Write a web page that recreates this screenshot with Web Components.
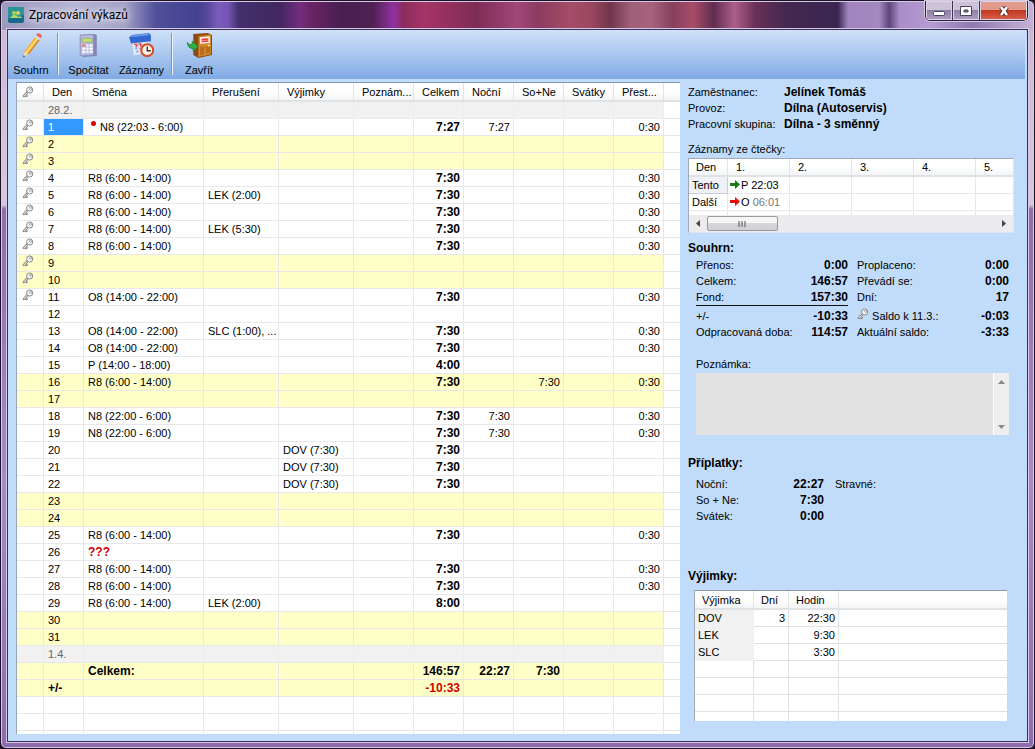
<!DOCTYPE html>
<html lang="cs">
<head>
<meta charset="utf-8">
<title>Zpracování výkazů</title>
<style>
  body { margin: 0; font: 11px/16px "Liberation Sans", Arial, sans-serif; color: #000; background: #1b1228; }
</style>
</head>
<body>
<app-window></app-window>
<script>
const define = (name, html, setup) => customElements.define(name, class extends HTMLElement {
  constructor() {
    super();
    this.attachShadow({ mode: 'open' }).innerHTML = html;
  }
  connectedCallback() { if (setup) setup.call(this, this.shadowRoot); }
});

const tableCss = `
  table { border-collapse: separate; border-spacing: 0; table-layout: fixed; width: 100%; background: #fff; }
  th, td { box-sizing: border-box; padding: 0; font-weight: normal; text-align: left; white-space: nowrap; overflow: hidden; line-height: 16px; }
  th { height: 19px; padding-left: 8px; border-right: 1px solid #e2e4e6; border-bottom: 2px solid #e0e2e4; background: linear-gradient(#fff 50%, #f3f4f6); }
  td { height: 17px; padding-left: 4px; border-right: 1px solid #e8e8ea; border-bottom: 1px solid #e8e8ea; }
  .num { text-align: right; padding-left: 0; padding-right: 3px; }
  th:last-child, td:last-child { border-right: 0; }
`;

/* Small silver key that marks closed days */
define('key-icon', `
  <style>:host { display: inline-block; width: 12px; height: 12px; vertical-align: top; } svg { display: block; }</style>
  <svg width="12" height="12" viewBox="0 0 12 12" fill="none">
    <path d="M5.6 6.2 1.800 10M3.300 8.800 4.600 10" stroke="#858585" stroke-width="2.4" stroke-linecap="round"/>
    <path d="M5.6 6.2 1.800 10M3.300 8.800 4.400 9.800" stroke="#f4f4f4" stroke-width="1"/>
    <circle cx="7.700" cy="4" r="3.1" fill="#f7f7f7" stroke="#8a8a8a"/>
    <circle cx="8.500" cy="3.300" r="1" fill="#fff" stroke="#8a8a8a" stroke-width=".8"/>
  </svg>`);

const icons = {
  pencil: `<path d="M5 18 16 3l4 3L9 20 4 23z" fill="#f9a928"/><path d="m7 19 11-14.5" stroke="#ffdc75" stroke-width="2"/><path d="M9 20 20 6" stroke="#d67a18"/><path d="m5 18 4 2-5 3.5z" fill="#f3d8ac"/><path d="m4.5 21.4 1.3.9L4 23.5z" fill="#333"/><path d="m15 4 1.5-2 4.3 3-1.6 2z" fill="#d4d8e2"/><path d="m16.5 2 1.2-1.6q2.2-.6 4 1.6.8 1-.9 3z" fill="#ed6253"/>`,
  calc: `<path d="m4 2 14-1 2 1v20l-13 1-3-2z" fill="#8587bb"/><path d="m4 2 13-.5V21L6 22l-2-1z" fill="#b9bbe0" stroke="#8082b5" stroke-width=".7"/><path d="M6 5h9.5v4H6z" fill="#bfdc79" stroke="#8ba957" stroke-width=".6"/><g fill="#fff"><path d="M6 11h3v2H6zM10 11h2v2h-2zM13 11h3v2h-3zM6 14h3v2H6zM10 14h2v2h-2zM13 14h3v2h-3zM6 17h3v2H6zM10 17h2v2h-2zM13 17h3v2h-3z"/></g><path d="M6 11h3v2H6z" fill="#e86565"/>`,
  calendar: `<path d="M2 6 19 4l1 15-16 3z" fill="#d9e7fb" stroke="#a4bde3" stroke-width=".6"/><path d="m0 4 3-2 16-2 2 2v6L2 10z" fill="#3267cf"/><path d="m1 4 2.500-1.500 15-2 1 1.300z" fill="#72a2f0"/><path d="m7 12 2-.3M11 11.500l2-.3M6 15l2-.3M7 18l2-.3M10 15h1" stroke="#91a7d8" stroke-width="1.800"/><path d="m5 11 2-.3v3.300M9 10.500l2-.2v3" stroke="#e24c4c" stroke-width="1.2" fill="none"/><circle cx="17.5" cy="16.5" r="5.7" fill="#fff3e5" stroke="#d34c26" stroke-width="2"/><path d="M17.5 13v4h3.500" fill="none" stroke="#333" stroke-width="1.3"/>`,
  door: `<path d="M6 1 20 0l4 2v19l-13 3-5-3z" fill="#8c4b13"/><path d="M11 3 23 1.500v19L11 23z" fill="#d68a2d"/><path d="M12.500 13h4v8l-4 .7zM18 12.500h4V19l-4 .8z" fill="#bb6c1d"/><path d="m12.500 4 9.500-.8v6.300l-9.500.8z" fill="#fff2ed"/><path d="m14 6.300 6.500-.5M14 8.200l6.500-.5" stroke="#e93636" stroke-width="1.5"/><circle cx="21" cy="12" r="1" fill="#ffe68a"/><path d="M0 9q2 3 5 2V8l6 5-5 4.500v-2.500Q1 15 0 9z" fill="#35ad45" stroke="#17792c" stroke-width=".7"/>`
};

define('tool-button', `
  <style>
    :host { display: block; }
    button { width: 100%; height: 49px; padding: 3px 0 0; border: 0; background: none; font: inherit; color: inherit; display: flex; flex-direction: column; align-items: center; gap: 4px; }
    svg { display: block; flex: none; }
  </style>
  <button type="button"><svg width="25" height="25" viewBox="0 0 24 24"></svg><span><slot></slot></span></button>`,
  function (root) { root.querySelector('svg').innerHTML = icons[this.getAttribute('icon')]; });

define('tool-bar', `
  <style>
    :host { display: flex; height: 49px; margin-right: 2px; background: linear-gradient(#cfe1f8, #a6c4ee 55%, #80aae4); }
    tool-button { width: 46px; } .wide { width: 53px; }
    i { width: 1px; margin: 3px 3px 4px; background: #7398ca; border-right: 1px solid #eef5ff; }
  </style>
  <tool-button icon="pencil">Souhrn</tool-button><i></i>
  <tool-button class="wide" icon="calc">Spočítat</tool-button>
  <tool-button class="wide" icon="calendar">Záznamy</tool-button><i></i>
  <tool-button icon="door">Zavřít</tool-button>`);

define('title-bar', `
  <style>
    :host { display: flex; height: 28px; padding-left: 7px; align-items: center; gap: 5px; box-sizing: border-box; }
    h1 { flex: 1; margin: 0; font: 12px/18px Roboto, "Open Sans", sans-serif; text-shadow: 0 0 6px #fff, 0 0 10px #fff; }
    .box { display: flex; align-self: flex-start; height: 19px; margin-right: 6px; border: 1px solid #2e2340; border-top: 0; border-radius: 0 0 5px 5px; overflow: hidden; box-shadow: 0 0 0 1px #d5c8e2; }
    button { width: 27px; padding: 0; border: 0; border-right: 1px solid #3c3150; background: linear-gradient(#cbc2d6 0 45%, #8e80a2 50%, #b0a0c4); display: grid; place-items: center; box-shadow: inset 0 0 0 1px #ddd3e6; }
    button:last-child { width: 47px; border: 0; background: linear-gradient(#e29a8c 0 45%, #c03a20 50%, #d8604c); }
  </style>
  <svg width="16" height="16" viewBox="0 0 16 16"><rect width="16" height="16" rx="2" fill="#17698a"/><path d="M0 2q0-2 2-2h12q2 0 2 2v6L0 12z" fill="#2a9598"/><circle cx="6" cy="6" r="2" fill="#aad45e"/><circle cx="10" cy="6" r="2" fill="#e0cf5a"/><path d="M2.5 11q1-3 4-3t3.500 2q3-2 4 1z" fill="#b3d96a"/></svg>
  <h1>Zpracování výkazů</h1>
  <div class="box">
    <button type="button" aria-label="Minimalizovat"><svg width="12" height="12"><rect x=".5" y="6.500" width="11" height="4" rx="1" fill="#fff" stroke="#4b4560"/></svg></button>
    <button type="button" aria-label="Maximalizovat"><svg width="12" height="12"><path d="M.5 1.500h11v9H.5z" fill="#fff" stroke="#4b4560"/><path d="M4 5h4v2H4z" fill="#8b809a" stroke="#4b4560"/></svg></button>
    <button type="button" aria-label="Zavřít okno"><svg width="14" height="12"><path d="m4 2 6 8M10 2l-6 8" stroke="#5c2a2a" stroke-width="4.500"/><path d="m4 2 6 8M10 2l-6 8" stroke="#fff" stroke-width="2.500"/></svg></button>
  </div>`);

/* Month sheet: [kind, day, shift, break, exception, total, night, sat+sun, overtime, locked] */
const R = 'R8 (6:00 - 14:00)', O = 'O8 (14:00 - 22:00)', N = 'N8 (22:00 - 6:00)', D = 'DOV (7:30)';
const days = [
  ['out', '28.2.'],
  ['sel', '1', 'N8 (22:03 - 6:00)', '', '', '7:27', '7:27', '', '0:30', 1],
  ['free', '2', '', '', '', '', '', '', '', 1], ['free', '3', '', '', '', '', '', '', '', 1],
  ['', '4', R, '', '', '7:30', '', '', '0:30', 1],
  ['', '5', R, 'LEK (2:00)', '', '7:30', '', '', '0:30', 1],
  ['', '6', R, '', '', '7:30', '', '', '0:30', 1],
  ['', '7', R, 'LEK (5:30)', '', '7:30', '', '', '0:30', 1],
  ['', '8', R, '', '', '7:30', '', '', '0:30', 1],
  ['free', '9', '', '', '', '', '', '', '', 1], ['free', '10', '', '', '', '', '', '', '', 1],
  ['', '11', O, '', '', '7:30', '', '', '0:30', 1],
  ['', '12'],
  ['', '13', O, 'SLC (1:00), ...', '', '7:30', '', '', '0:30'],
  ['', '14', O, '', '', '7:30', '', '', '0:30'],
  ['', '15', 'P (14:00 - 18:00)', '', '', '4:00'],
  ['free', '16', R, '', '', '7:30', '', '7:30', '0:30'],
  ['free', '17'],
  ['', '18', N, '', '', '7:30', '7:30', '', '0:30'],
  ['', '19', N, '', '', '7:30', '7:30', '', '0:30'],
  ['', '20', '', '', D, '7:30'], ['', '21', '', '', D, '7:30'], ['', '22', '', '', D, '7:30'],
  ['free', '23'], ['free', '24'],
  ['', '25', R, '', '', '7:30', '', '', '0:30'],
  ['odd', '26', '???'],
  ['', '27', R, '', '', '7:30', '', '', '0:30'],
  ['', '28', R, '', '', '7:30', '', '', '0:30'],
  ['', '29', R, 'LEK (2:00)', '', '8:00'],
  ['free', '30'], ['free', '31'],
  ['out', '1.4.'],
  ['free sum', '', 'Celkem:', '', '', '146:57', '22:27', '7:30'],
  ['free sum minus', '+/-', '', '', '', '-10:33'],
  ['', ''], ['', ''], ['tail', '']
];

define('month-sheet', `
  <style>
    :host { display: block; background: #fff; border-top: 1px solid #8199b8; border-left: 1px solid #98a5b5; box-sizing: border-box; }
    ${tableCss}
    td:first-child, th:first-child { padding: 0 0 0 5px; vertical-align: top; }
    key-icon { display: block; }
    th:first-child { padding-top: 3px; }
    .free td:not(:last-child) { background: #ffffc8; }
    .out td:not(:last-child) { background: #f1f1f1; border-right-color: #eee; color: #666; }
    .sel td:nth-child(2) { background: #3399ff; color: #fff; }
    .sel td:nth-child(3)::before { content: ""; display: inline-block; width: 5px; height: 5px; margin: 0 4px 5px 3px; border-radius: 50%; background: #e00000; vertical-align: baseline; }
    td:nth-child(7), .sum td, .odd td:nth-child(3) { font-weight: bold; font-size: 12px; }
    .odd td:nth-child(3), .minus td:nth-child(7) { color: #d00000; }
    .tail td { height: 3px; border-bottom: 0; line-height: 0; }
  </style>
  <table>
    <colgroup><col width="27"><col width="40"><col width="120"><col width="75"><col width="75"><col width="60"><col width="50"><col width="50"><col width="50"><col width="50"><col width="50"><col></colgroup>
    <thead><tr><th><key-icon></key-icon></th><th>Den</th><th>Směna</th><th>Přerušení</th><th>Výjimky</th><th>Poznám...</th><th>Celkem</th><th>Noční</th><th>So+Ne</th><th>Svátky</th><th>Přest...</th><th></th></tr></thead>
    <tbody></tbody>
  </table>`,
  function (root) {
    root.querySelector('tbody').innerHTML = days.map(([kind, day, shift = '', brk = '', exc = '', total = '', night = '', weekend = '', over = '', locked]) =>
      `<tr class="${kind}"><td>${locked ? '<key-icon></key-icon>' : ''}</td><td>${day}</td><td>${shift}</td><td>${brk}</td><td>${exc}</td><td></td>` +
      `<td class="num">${total}</td><td class="num">${night}</td><td class="num">${weekend}</td><td></td><td class="num">${over}</td><td></td></tr>`).join('');
  });

define('reader-log', `
  <style>
    :host { display: block; border: 1px solid #a0aab8; border-right-color: #dce6f2; border-bottom-color: #dce6f2; background: #fff; }
    ${tableCss}
    th { height: 18px; padding-left: 8px; }
    th:first-child { padding-left: 7px; } td { padding-left: 2px; } td:first-child { padding-left: 3px; }
    .now td:first-child { background: #eef1f6; border-color: #c5cedd; }
    .tail td { height: 4px; line-height: 0; border-bottom: 0; }
    svg { margin-right: 1px; } .late { color: #777; }
    .bar { display: flex; height: 17px; background: #ececee; align-items: center; }
    .bar button { width: 18px; height: 17px; padding: 0; border: 0; background: none; display: grid; place-items: center; }
    .thumb { box-sizing: border-box; width: 71px; height: 15px; border: 1px solid #9a9a9c; border-radius: 2px; background: linear-gradient(#f6f6f6 45%, #d6d6da 50%, #d0d0d4); display: grid; place-items: center; }
    .space { flex: 1; }
  </style>
  <table>
    <colgroup><col width="39"><col width="62"><col width="62"><col width="62"><col width="62"><col></colgroup>
    <thead><tr><th>Den</th><th>1.</th><th>2.</th><th>3.</th><th>4.</th><th>5.</th></tr></thead>
    <tbody>
      <tr class="now"><td>Tento</td><td><svg width="10" height="9" viewBox="0 0 10 9"><path d="M0 3h5V0l5 4.500L5 9V6H0z" fill="#1a7a1a"/></svg>P 22:03</td><td></td><td></td><td></td><td></td></tr>
      <tr><td>Další</td><td><svg width="10" height="9" viewBox="0 0 10 9"><path d="M0 3h5V0l5 4.500L5 9V6H0z" fill="#e01010"/></svg>O <span class="late">06:01</span></td><td></td><td></td><td></td><td></td></tr>
      <tr class="tail"><td></td><td></td><td></td><td></td><td></td><td></td></tr>
    </tbody>
  </table>
  <div class="bar">
    <button type="button" aria-label="Posunout vlevo"><svg width="4" height="7"><path d="M4 0v7L0 3.500z" fill="#444"/></svg></button>
    <div class="thumb"><svg width="8" height="6"><path d="M1 0v6M4 0v6M7 0v6" stroke="#555"/></svg></div>
    <div class="space"></div>
    <button type="button" aria-label="Posunout vpravo"><svg width="4" height="7"><path d="M0 0v7l4-3.500z" fill="#444"/></svg></button>
  </div>`);

define('value-row', `
  <style>
    :host { display: flex; justify-content: space-between; line-height: 16px; white-space: nowrap; }
    b { font-size: 12px; }
  </style>
  <span><slot></slot></span><b></b>`,
  function (root) { root.querySelector('b').textContent = this.getAttribute('value') || ''; });

define('exception-table', `
  <style>
    :host { display: block; border-top: 1px solid #8c98a8; border-left: 1px solid #a0aab8; background: #fff; }
    ${tableCss}
    th { padding-left: 7px; }
    td { padding-left: 3px; border-color: #dfe1e4; }
    tbody .data td:first-child { background: #f1f1f1; border-color: #f1f1f1; }
    .num { padding-left: 0; }
    .tail td { height: 9px; line-height: 0; border-bottom: 0; }
  </style>
  <table>
    <colgroup><col width="59"><col width="35"><col width="50"><col></colgroup>
    <thead><tr><th>Výjimka</th><th>Dní</th><th>Hodin</th><th></th></tr></thead>
    <tbody>
      <tr class="data"><td>DOV</td><td class="num">3</td><td class="num">22:30</td><td></td></tr>
      <tr class="data"><td>LEK</td><td></td><td class="num">9:30</td><td></td></tr>
      <tr class="data"><td>SLC</td><td></td><td class="num">3:30</td><td></td></tr>
      <tr><td></td><td></td><td></td><td></td></tr>
      <tr><td></td><td></td><td></td><td></td></tr>
      <tr><td></td><td></td><td></td><td></td></tr>
      <tr class="tail"><td></td><td></td><td></td><td></td></tr>
    </tbody>
  </table>`);

define('note-box', `
  <style>
    :host { display: block; }
    label { display: block; line-height: 16px; }
    .box { display: flex; height: 62px; margin-top: 1px; }
    textarea { flex: 1; resize: none; border: 0; padding: 2px; margin: 0; background: #e2e2e2; font: inherit; outline: 0; overflow: hidden; }
    .bar { width: 15px; display: flex; flex-direction: column; justify-content: space-between; background: #eeeeee; border-left: 1px solid #fff; }
    button { height: 17px; border: 0; padding: 0; background: none; display: grid; place-items: center; }
  </style>
  <label for="note">Poznámka:</label>
  <div class="box"><textarea id="note" readonly></textarea>
    <div class="bar">
      <button type="button" aria-label="Nahoru"><svg width="7" height="4"><path d="M0 4h7L3.500 0z" fill="#888"/></svg></button>
      <button type="button" aria-label="Dolů"><svg width="7" height="4"><path d="M0 0h7L3.500 4z" fill="#888"/></svg></button>
    </div></div>`);

define('side-panel', `
  <style>
    :host { display: block; padding: 5px 13px 0 8px; box-sizing: border-box; }
    dl { margin: 0; display: grid; grid-template-columns: 96px 1fr; line-height: 16px; white-space: nowrap; }
    dd { margin: 0; font-weight: bold; font-size: 12px; }
    h2 { margin: 0; font-size: 12px; line-height: 16px; }
    .caption { margin-top: 9px; }
    reader-log { margin-top: 1px; }
    .summary-title { margin-top: 7px; }
    .indent { margin: 0 5px 0 8px; }
    .two { display: grid; grid-template-columns: 1fr 1fr; column-gap: 9px; margin-top: 1px; }
    .line { border-bottom: 1px solid #111; }
    .after { margin-top: 2px; }
    .note { margin-top: 16px; }
    .extra-title { margin-top: 20px; }
    .extra { display: grid; grid-template-columns: 128px 1fr; column-gap: 11px; margin-top: 5px; }
    .exc-title { margin-top: 44px; }
    exception-table { margin: 6px 7px 0 6px; }
  </style>
  <dl><dt>Zaměstnanec:</dt><dd>Jelínek Tomáš</dd><dt>Provoz:</dt><dd>Dílna (Autoservis)</dd><dt>Pracovní skupina:</dt><dd>Dílna - 3 směnný</dd></dl>
  <div class="caption">Záznamy ze čtečky:</div>
  <reader-log></reader-log>
  <h2 class="summary-title">Souhrn:</h2>
  <div class="indent two">
    <value-row value="0:00">Přenos:</value-row><value-row value="0:00">Proplaceno:</value-row>
    <value-row value="146:57">Celkem:</value-row><value-row value="0:00">Převádí se:</value-row>
    <value-row class="line" value="157:30">Fond:</value-row><value-row value="17">Dní:</value-row>
    <value-row class="after" value="-10:33">+/-</value-row><value-row class="after" value="-0:03"><key-icon></key-icon> Saldo k 11.3.:</value-row>
    <value-row value="114:57">Odpracovaná doba:</value-row><value-row value="-3:33">Aktuální saldo:</value-row>
  </div>
  <note-box class="indent note"></note-box>
  <h2 class="extra-title">Příplatky:</h2>
  <div class="indent extra">
    <value-row value="22:27">Noční:</value-row><value-row>Stravné:</value-row>
    <value-row value="7:30">So + Ne:</value-row><span></span>
    <value-row value="0:00">Svátek:</value-row>
  </div>
  <h2 class="exc-title">Výjimky:</h2>
  <exception-table></exception-table>`);

define('app-window', `
  <style>
    :host {
      display: flex; flex-direction: column; box-sizing: border-box; min-height: 100vh; padding: 0 6px 6px;
      border: 1px solid #1b1228; border-radius: 6px; box-shadow: inset 0 0 0 1px #d9cbe6;
      background:
        linear-gradient(90deg, #9c98be 0, #b4b4d4 7%, #a3a1c6 12%, #4f4f9a 15%, #42428e 19%, #56489c 20%, #7a5cbc 21%, #7454b4 22%, #43306e 23%, #41285f 27%, #742d7e 29%, #6a2464 30%, #471f50 33%, #502052 36%, #9032a0 38%, #8c2c5c 39%, #a53468 41%, #7e2c56 46%, #a14779 50%, #8a3c60 52%, #a44c68 55%, #9c4860 57%, #70364c 59%, #a06078 61%, #a5647b 63%, #86405c 65%, #a84c68 67%, #602c50 69%, #ac6088 71%, #6a3058 73%, #43284f 76%, #39264f 81%, #a083be 82%, #a389c0 85%, #5e4678 86%, #a88dc8 87%, #b49bd0 90%, #8f7ab0 94%, #c5b3d6 100%) 0 0 / 100% 29px no-repeat,
        linear-gradient(#cdb9d6 29px, #d8c7dc 204px, #8f6cae 208px, #a68bc8 480px, #8c6cae);
    }
    title-bar { margin: 0 -6px; }
    main { flex: 1; border: 1px solid #3b2d58; background: #c1dcfa; box-shadow: 0 0 0 1px #d9cbe6; }
    .work { display: grid; grid-template-columns: minmax(0, 1fr) 347px; padding-left: 8px; }
    month-sheet { margin-top: 3px; margin-bottom: 7px; }
  </style>
  <title-bar></title-bar>
  <main>
    <tool-bar></tool-bar>
    <div class="work"><month-sheet></month-sheet><side-panel></side-panel></div>
  </main>`);
</script>
</body>
</html>
